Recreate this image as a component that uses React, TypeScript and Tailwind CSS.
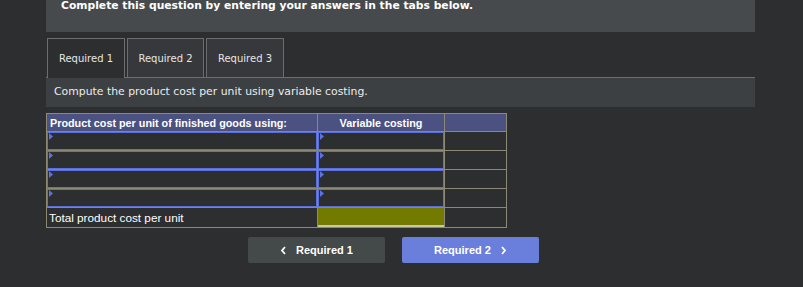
import React from 'react';

const rows = [0, 1, 2, 3];

function Flag() {
  return (
    <svg className="absolute left-0 top-0" width="5" height="7" viewBox="0 0 5 7">
      <path d="M1 0 L5 3.5 L1 7 Z" fill="#5b72e0" />
    </svg>
  );
}

function InputCell() {
  return (
    <td className="border border-[#8c8a77] p-0">
      <div className="relative h-[18px] w-full border border-[#5a6fd8]">
        <Flag />
      </div>
    </td>
  );
}

export default function App() {
  return (
    <div className="h-[287px] w-[803px] bg-[#2d2e30] font-['DejaVu_Sans',sans-serif]">
      <div className="ml-[46px] w-[709px]">
        <div className="h-[32px] bg-[#474a4d] pl-[15px] text-[10.75px] leading-[12px] font-bold text-white">
          Complete this question by entering your answers in the tabs below.
        </div>

        <div className="mt-[6px] flex h-[40px] items-end border-b border-[#6b6d70]">
          <div className="-mb-px ml-px mr-[2px] flex h-[40px] w-[78px] items-center justify-center border border-b-0 border-[#6b6d70] bg-[#2d2e30] text-[10px] text-[#e6e6e6]">
            Required 1
          </div>
          <div className="mr-[2px] flex h-[39px] w-[77px] items-center justify-center border border-b-0 border-[#6b6d70] bg-[#36383b] text-[10px] text-[#e6e6e6]">
            Required 2
          </div>
          <div className="flex h-[39px] w-[78px] items-center justify-center border border-b-0 border-[#6b6d70] bg-[#36383b] text-[10px] text-[#e6e6e6]">
            Required 3
          </div>
        </div>

        <div className="flex h-[29px] items-center bg-[#3d4043] pl-[8px] text-[10.85px] text-[#ececec]">
          Compute the product cost per unit using variable costing.
        </div>

        <table className="mt-[6px] w-[461px] border-collapse font-['Liberation_Sans',Arial,sans-serif] text-[10.8px] leading-[14px] text-white">
          <thead>
            <tr className="h-[18px] bg-[#4b5282]">
              <th className="w-[271px] border border-[#8c8a77] px-[3px] py-0 text-left font-bold">
                Product cost per unit of finished goods using:
              </th>
              <th className="w-[127px] border border-[#8c8a77] py-0 text-center font-bold">Variable costing</th>
              <th className="border border-[#8c8a77] p-0"></th>
            </tr>
          </thead>
          <tbody>
            {rows.map((r) => (
              <tr key={r} className="h-[19px]">
                <InputCell />
                <InputCell />
                <td className="border border-[#8c8a77] p-0"></td>
              </tr>
            ))}
            <tr className="h-[20px]">
              <td className="border border-[#8c8a77] px-[2px] py-0 text-[11.75px]">Total product cost per unit</td>
              <td className="border border-[#8c8a77] bg-[#737a00] p-0">
                <div className="h-[19px] border-b-2 border-[#c9c7a8]"></div>
              </td>
              <td className="border border-[#8c8a77] p-0"></td>
            </tr>
          </tbody>
        </table>

        <div className="ml-[202px] mt-[9px] flex gap-[17px] font-['Liberation_Sans',Arial,sans-serif] text-[11px] font-bold text-white">
          <div className="flex h-[26px] w-[137px] items-center justify-center gap-[9px] rounded-[2px] bg-[#444a4a]">
            <svg width="7" height="9" viewBox="0 0 7 9">
              <path d="M5 1 L2 4.5 L5 8" fill="none" stroke="white" strokeWidth="1.8" />
            </svg>
            <span>Required 1</span>
          </div>
          <div className="flex h-[26px] w-[137px] items-center justify-center gap-[9px] rounded-[2px] bg-[#6a7fdc]">
            <span>Required 2</span>
            <svg width="7" height="9" viewBox="0 0 7 9">
              <path d="M2 1 L5 4.5 L2 8" fill="none" stroke="white" strokeWidth="1.8" />
            </svg>
          </div>
        </div>
      </div>
    </div>
  );
}
